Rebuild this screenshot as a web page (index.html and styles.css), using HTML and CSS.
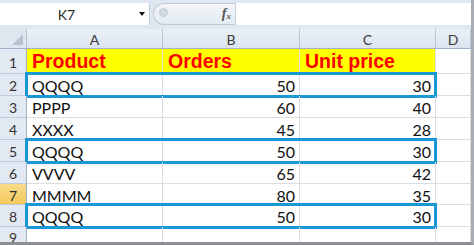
FILE: index.html
```html
<!DOCTYPE html>
<html>
<head>
<meta charset="utf-8">
<link rel="stylesheet" href="styles.css">
</head>
<body>
<div class="app">
  <div class="fbar">
    <div class="namebox"><span class="ref">K7</span><span class="dd"></span></div>
    <div class="expander"><span class="knob"></span><span class="fx"><i>f</i><sub>x</sub></span></div>
    <div class="finput"></div>
  </div>
  <div class="sheet">
    <div class="row hdr">
      <div class="corner"><svg width="11" height="11" viewBox="0 0 11 11"><polygon points="11,0 11,11 0,11" fill="#b9c3cf"/></svg></div>
      <div class="ch">A</div><div class="ch">B</div><div class="ch">C</div><div class="ch">D</div>
    </div>
    <div class="row r1">
      <div class="rh">1</div>
      <div class="c title">Product</div><div class="c title">Orders</div><div class="c title">Unit price</div><div class="c"></div>
    </div>
    <div class="row r2 sel">
      <div class="rh">2</div>
      <div class="c">QQQQ</div><div class="c num">50</div><div class="c num">30</div><div class="c"></div>
    </div>
    <div class="row r3">
      <div class="rh">3</div>
      <div class="c">PPPP</div><div class="c num">60</div><div class="c num">40</div><div class="c"></div>
    </div>
    <div class="row r4">
      <div class="rh">4</div>
      <div class="c">XXXX</div><div class="c num">45</div><div class="c num">28</div><div class="c"></div>
    </div>
    <div class="row r5 sel">
      <div class="rh">5</div>
      <div class="c">QQQQ</div><div class="c num">50</div><div class="c num">30</div><div class="c"></div>
    </div>
    <div class="row r6">
      <div class="rh">6</div>
      <div class="c">VVVV</div><div class="c num">65</div><div class="c num">42</div><div class="c"></div>
    </div>
    <div class="row r7">
      <div class="rh active">7</div>
      <div class="c">MMMM</div><div class="c num">80</div><div class="c num">35</div><div class="c"></div>
    </div>
    <div class="row r8 sel">
      <div class="rh">8</div>
      <div class="c">QQQQ</div><div class="c num">50</div><div class="c num">30</div><div class="c"></div>
    </div>
    <div class="row r9">
      <div class="rh">9</div>
      <div class="c"></div><div class="c"></div><div class="c"></div><div class="c"></div>
    </div>
  </div>
</div>
</body>
</html>
```
FILE: styles.css
```css
html, body {
  margin: 0;
  padding: 0;
  background: #ffffff;
}
.app {
  width: 471px;
  height: 242px;
  border-right: 3px solid #a9adb3;
  border-bottom: 3px solid #8d8f92;
  overflow: hidden;
  background: #dbe4ef;
  font-family: Lato, "Open Sans", sans-serif;
}
.fbar {
  display: flex;
  height: 22px;
  padding-top: 3px;
  padding-bottom: 4px;
  background: #dfe7f1;
}
.namebox {
  width: 149px;
  background: #fff;
  border-right: 1px solid #c3cfdd;
  position: relative;
  display: flex;
  align-items: center;
  justify-content: center;
  font-size: 14px;
  color: #2c2c2c;
}
.ref {
  margin-left: -16px;
}
.dd {
  position: absolute;
  right: 4px;
  top: 9px;
  width: 0;
  height: 0;
  border-left: 3.5px solid transparent;
  border-right: 3.5px solid transparent;
  border-top: 4px solid #111;
}
.expander {
  margin-left: 3px;
  width: 82px;
  background: linear-gradient(#f3f6fa, #e3eaf3);
  border: 1px solid #c2ccd8;
  border-right: none;
  border-radius: 11px 0 0 11px;
  box-sizing: border-box;
  display: flex;
  align-items: center;
  justify-content: space-between;
  padding: 0 4px 0 5px;
}
.knob {
  width: 7px;
  height: 7px;
  border-radius: 50%;
  background: #d2d9e2;
  border: 1px solid #c0c8d2;
  margin-top: -4px;
}
.fx {
  font-family: "Liberation Serif", serif;
  font-size: 14px;
  color: #555;
  font-weight: bold;
  line-height: 1;
}
.fx sub {
  font-size: 9px;
  font-style: italic;
  vertical-align: -1px;
}
.finput {
  flex: 1;
  background: #fff;
  border-left: 1px solid #c3cfdd;
}
.sheet {
  background: #fff;
}
.row {
  display: grid;
  grid-template-columns: 27px 136px 137px 136px 1fr;
  position: relative;
}
.hdr { height: 20px; }
.r1 { height: 25px; }
.r2, .r3, .r4, .r5, .r6, .r8 { height: 22px; }
.r7 { height: 21px; }
.r9 { height: 15px; }
.corner {
  background: #dfe6ef;
  border-right: 1px solid #b8c4d3;
  border-bottom: 1px solid #9eb1c8;
  display: flex;
  align-items: flex-end;
  justify-content: flex-end;
  padding: 0 3px 3px 0;
}
.ch {
  background: linear-gradient(#eaf0f7, #dbe4ef);
  border-right: 1px solid #b8c4d3;
  border-bottom: 1px solid #9eb1c8;
  display: flex;
  align-items: center;
  justify-content: center;
  font-size: 14px;
  color: #3a3a3a;
  padding-top: 2px;
}
.rh {
  background: #e2e9f2;
  border-right: 1px solid #9eb1c8;
  border-bottom: 1px solid #c0cbd8;
  display: flex;
  align-items: center;
  justify-content: center;
  font-size: 14px;
  color: #333;
  padding-top: 2px;
}
.rh.active {
  background: linear-gradient(#f9dc8a, #f5c95c);
  color: #333;
}
.c {
  border-right: 1px solid #dadcdd;
  border-bottom: 1px solid #dadcdd;
  display: flex;
  align-items: center;
  padding: 2px 4px 0 5px;
  font-size: 16px;
  color: #111;
  overflow: hidden;
  white-space: nowrap;
}
.num {
  justify-content: flex-end;
}
.r1 .title {
  background: #ffff00;
  color: #ff0000;
  font-family: "Liberation Sans", Arial, sans-serif;
  font-weight: bold;
  font-size: 19.5px;
  padding-top: 0;
}
.sel::after {
  content: "";
  position: absolute;
  left: 25px;
  right: 34px;
  top: -2px;
  bottom: -2px;
  border: 3px solid #1a98d6;
  pointer-events: none;
}
```
